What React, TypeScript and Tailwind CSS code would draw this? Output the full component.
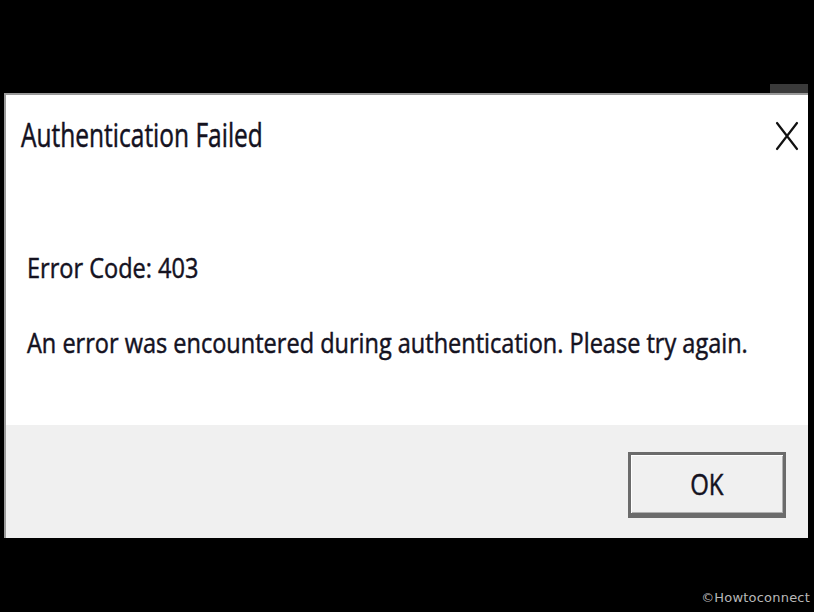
import React from 'react'

function CloseIcon() {
  return (
    <svg width="24" height="30" viewBox="0 0 24 30" className="block">
      <path d="M2 2 L22 28 M22 2 L2 28" stroke="#111" strokeWidth="2.2" strokeLinecap="round" fill="none" />
    </svg>
  )
}

export default function App() {
  const font = { fontFamily: '"Open Sans", "Noto Sans", sans-serif' }
  return (
    <div className="w-[814px] h-[612px] bg-black flex flex-col overflow-hidden" style={font}>
      <div className="h-[84px]" />
      <div className="h-[9px] flex justify-end pr-[6px]">
        <div className="w-[38px] h-full bg-[#3a3a3a]" />
      </div>
      <div className="ml-[4px] w-[804px] h-[445px] flex flex-col border-l-2 border-t-2 border-[#9a9a9a]">
        <div className="h-[330px] bg-white flex flex-col">
          <div className="flex items-start justify-between pt-[20px] pl-[15px] pr-[9px]">
            <div className="h-[40px] leading-[40px] text-[32px] text-[#14121f] [-webkit-text-stroke:0.5px_#14121f] origin-left scale-x-[0.766] whitespace-nowrap">
              Authentication Failed
            </div>
            <div className="pt-[6px]">
              <CloseIcon />
            </div>
          </div>
          <div className="pl-[21px] mt-[94px] flex flex-col gap-[39px]">
            <div className="h-[36px] leading-[36px] text-[28px] text-[#14121f] [-webkit-text-stroke:0.5px_#14121f] origin-left scale-x-[0.84] whitespace-nowrap">
              Error Code: 403
            </div>
            <div className="h-[36px] leading-[36px] text-[28px] text-[#14121f] [-webkit-text-stroke:0.5px_#14121f] origin-left scale-x-[0.84] whitespace-nowrap">
              An error was encountered during authentication. Please try again.
            </div>
          </div>
        </div>
        <div className="flex-1 bg-[#f0f0f0] flex justify-end items-start pt-[27px] pr-[22px]">
          <button className="w-[158px] h-[66px] border-[3px] border-b-[5px] border-[#6b6b6b] bg-[#f0f0f0] shadow-[inset_1px_1px_0_#ffffff,inset_-1px_-1px_0_#b0b0b0] flex items-center justify-center">
            <span className="text-[30px] leading-[36px] text-[#14121f] [-webkit-text-stroke:0.5px_#14121f] scale-x-[0.8]">OK</span>
          </button>
        </div>
      </div>
      <div className="flex-1 flex items-end justify-end pr-[4px] pb-[6px]">
        <span className="text-[13px] leading-[16px] text-[#b8b8b8] tracking-[0.2px]" style={{ fontFamily: '"DejaVu Sans", sans-serif' }}>
          ©Howtoconnect
        </span>
      </div>
    </div>
  )
}
